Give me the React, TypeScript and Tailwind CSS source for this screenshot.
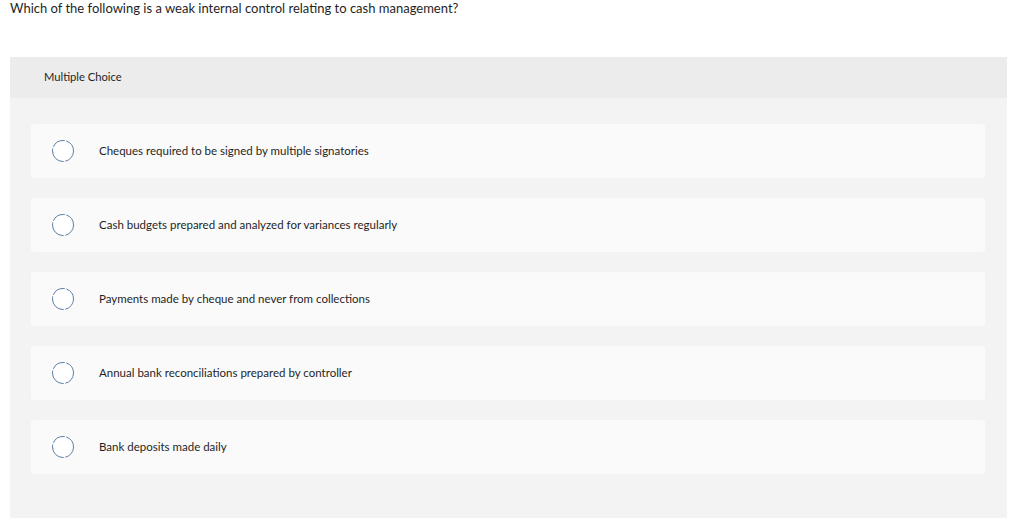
import React from 'react';

const choices = [
  'Cheques required to be signed by multiple signatories',
  'Cash budgets prepared and analyzed for variances regularly',
  'Payments made by cheque and never from collections',
  'Annual bank reconciliations prepared by controller',
  'Bank deposits made daily',
];

function RadioCircle() {
  return (
    <svg width="24" height="24" viewBox="0 0 24 24" className="shrink-0">
      <circle cx="12" cy="12" r="10.5" fill="#ffffff" stroke="#5f7fa6" strokeWidth="1" strokeDasharray="14 1.5 20 1.5" />
    </svg>
  );
}

export default function App() {
  return (
    <div className="w-[1024px] h-[529px] bg-white text-[#1f1f1f] overflow-hidden" style={{ fontFamily: 'Lato, "Liberation Sans", sans-serif' }}>
      <p className="pl-[10px] pt-0 text-[13px] leading-[16px]">
        Which of the following is a weak internal control relating to cash management?
      </p>

      <div className="mt-[41px] ml-[10px] w-[997px] bg-[#f3f3f3] rounded-[2px]">
        <div className="h-[41px] bg-[#ececec] flex items-center pl-[34px] text-[11.2px]">
          Multiple Choice
        </div>
        <div className="flex flex-col gap-[20px] pt-[26px] pb-[44px] pl-[21px] pr-[22px]">
          {choices.map((c) => (
            <div key={c} className="h-[54px] bg-[#fafafa] rounded-[3px] flex items-center pl-[20px]">
              <RadioCircle />
              <span className="ml-[24px] text-[11.5px]">{c}</span>
            </div>
          ))}
        </div>
      </div>
    </div>
  );
}
